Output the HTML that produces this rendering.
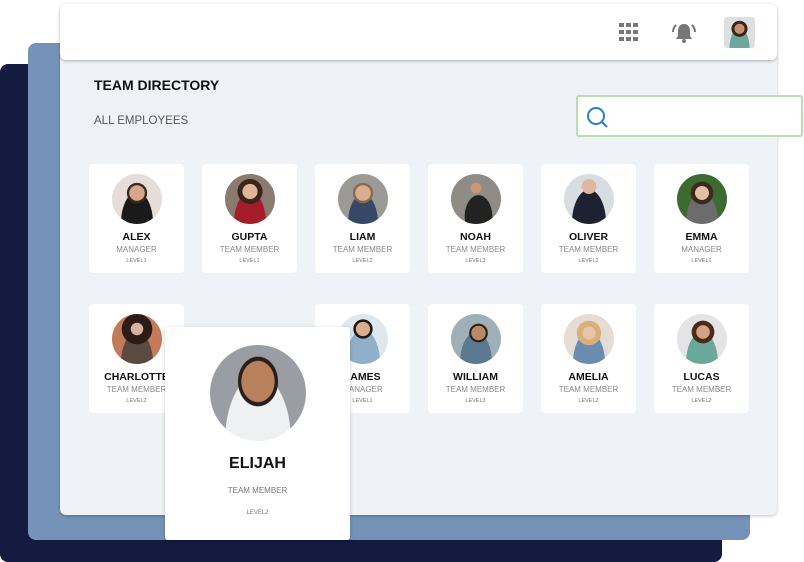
<!DOCTYPE html>
<html><head><meta charset="utf-8"><style>
*{margin:0;padding:0;box-sizing:border-box}
body{width:804px;height:562px;background:#fff;position:relative;overflow:hidden;font-family:"Liberation Sans",sans-serif}
.a{position:absolute}
.card{position:absolute;width:95px;height:109px;background:#fff;border-radius:4px;text-align:center}
.av{position:absolute;left:23px;top:10px;width:50px;height:50px;border-radius:50%}
.n{position:absolute;left:0;right:0;top:67px;font-size:10.5px;font-weight:bold;color:#111}
.r{position:absolute;left:0;right:0;top:81px;font-size:8px;color:#888}
.l{position:absolute;left:0;right:0;top:94px;font-size:5.5px;color:#777}
</style></head><body>
<div class="a" style="left:0;top:64px;width:722px;height:498px;background:#141a40;border-radius:8px"></div>
<div class="a" style="left:28px;top:43px;width:722px;height:497px;background:#7593b8;border-radius:8px"></div>
<div class="a" style="left:60px;top:56px;width:717px;height:459px;background:#eff3f8;border-radius:0 0 6px 6px;box-shadow:0 1px 3px rgba(0,0,0,.25)"></div>
<div class="a" style="left:60px;top:4px;width:717px;height:56px;background:#fff;border-radius:6px;box-shadow:0 1px 3px rgba(0,0,0,.3)"></div>
<svg class="a" style="left:619px;top:23px" width="19" height="18"><g fill="#777"><rect x="0" y="0" width="5" height="4"/><rect x="7" y="0" width="5" height="4"/><rect x="14" y="0" width="5" height="4"/><rect x="0" y="7" width="5" height="4"/><rect x="7" y="7" width="5" height="4"/><rect x="14" y="7" width="5" height="4"/><rect x="0" y="14" width="5" height="4"/><rect x="7" y="14" width="5" height="4"/><rect x="14" y="14" width="5" height="4"/></g></svg>
<svg class="a" style="left:672px;top:22px" width="24" height="22" viewBox="0 0 24 22"><path d="M12 2c-4 0-6 3-6 7v5l-2 3h16l-2-3V9c0-4-2-7-6-7z" fill="#777"/><circle cx="12" cy="19" r="2" fill="#777"/><path d="M4 3Q1 6 1 10M20 3q3 3 3 7" stroke="#777" stroke-width="2" fill="none"/></svg>
<div class="a" style="left:724px;top:17px;width:31px;height:31px;border-radius:3px;background:radial-gradient(circle at 50% 38%,#c98f72 20%,#3a2418 21%,#3a2418 32%,transparent 33%),radial-gradient(ellipse at 50% 100%,#6ea79b 45%,transparent 46%),#dde0e0"></div>
<div class="a" style="left:94px;top:77px;font-size:14px;font-weight:bold;color:#111">TEAM DIRECTORY</div>
<div class="a" style="left:94px;top:115px;font-size:11.5px;color:#555">ALL EMPLOYEES</div>
<div class="a" style="left:576px;top:95px;width:227px;height:42px;background:#fff;border:2px solid #b7dfb0;border-radius:3px"></div>
<svg class="a" style="left:585px;top:105px" width="26" height="26"><circle cx="11" cy="11" r="8" stroke="#2c7fd0" stroke-width="2" fill="none"/><path d="M17 17l5 5" stroke="#2c7fd0" stroke-width="2"/></svg>

<div class="card" style="left:89px;top:164px"><div class="av" style="background:radial-gradient(circle at 50% 38%,#d6a58c 19%,#3b2a20 20%,#3b2a20 25%,transparent 26%),radial-gradient(ellipse at 50% 100%,#1a1a1a 45%,transparent 46%),#e6ddd8"></div><div class="n">ALEX</div><div class="r">MANAGER</div><div class="l">LEVEL1</div></div>
<div class="card" style="left:202px;top:164px"><div class="av" style="background:radial-gradient(circle at 50% 35%,#e0b39a 18%,#3a2518 19%,#3a2518 30%,transparent 31%),radial-gradient(ellipse at 50% 100%,#a51d2a 45%,transparent 46%),#8b7a70"></div><div class="n">GUPTA</div><div class="r">TEAM MEMBER</div><div class="l">LEVEL1</div></div>
<div class="card" style="left:315px;top:164px"><div class="av" style="background:radial-gradient(circle at 50% 38%,#d9ad92 19%,#8a6a48 20%,#8a6a48 25%,transparent 26%),radial-gradient(ellipse at 50% 100%,#354866 42%,transparent 43%),#9c9a96"></div><div class="n">LIAM</div><div class="r">TEAM MEMBER</div><div class="l">LEVEL2</div></div>
<div class="card" style="left:428px;top:164px"><div class="av" style="background:radial-gradient(circle at 50% 28%,#c9967a 12%,transparent 13%),radial-gradient(ellipse at 55% 85%,#222 35%,transparent 36%),#8f8c85"></div><div class="n">NOAH</div><div class="r">TEAM MEMBER</div><div class="l">LEVEL3</div></div>
<div class="card" style="left:541px;top:164px"><div class="av" style="background:radial-gradient(circle at 50% 25%,#e0b8a0 16%,transparent 17%),radial-gradient(ellipse at 50% 100%,#1e2230 48%,transparent 49%),#d8dde2"></div><div class="n">OLIVER</div><div class="r">TEAM MEMBER</div><div class="l">LEVEL2</div></div>
<div class="card" style="left:654px;top:164px"><div class="av" style="background:radial-gradient(circle at 50% 38%,#e3bfa6 17%,#3a2a20 18%,#3a2a20 28%,transparent 29%),radial-gradient(ellipse at 50% 100%,#6c6c6c 45%,transparent 46%),#3d6a30"></div><div class="n">EMMA</div><div class="r">MANAGER</div><div class="l">LEVEL1</div></div>

<div class="card" style="left:89px;top:304px"><div class="av" style="background:radial-gradient(circle at 50% 30%,#d8b29a 14%,#2a1d18 15%,#2a1d18 35%,transparent 36%),radial-gradient(ellipse at 50% 100%,#5a4a40 45%,transparent 46%),#c27a5a"></div><div class="n">CHARLOTTE</div><div class="r">TEAM MEMBER</div><div class="l">LEVEL2</div></div>
<div class="card" style="left:315px;top:304px"><div class="av" style="background:radial-gradient(circle at 50% 30%,#d9ae8c 16%,#1d1a18 17%,#1d1a18 22%,transparent 23%),radial-gradient(ellipse at 50% 100%,#8fb0c8 48%,transparent 49%),#dfe8ee"></div><div class="n">JAMES</div><div class="r">MANAGER</div><div class="l">LEVEL1</div></div>
<div class="card" style="left:428px;top:304px"><div class="av" style="background:radial-gradient(circle at 55% 38%,#b88868 17%,#2a2018 18%,#2a2018 22%,transparent 23%),radial-gradient(ellipse at 50% 100%,#5b7a90 45%,transparent 46%),#9fb0b8"></div><div class="n">WILLIAM</div><div class="r">TEAM MEMBER</div><div class="l">LEVEL3</div></div>
<div class="card" style="left:541px;top:304px"><div class="av" style="background:radial-gradient(circle at 50% 38%,#e8c4ac 16%,#d7b07a 17%,#d7b07a 30%,transparent 31%),radial-gradient(ellipse at 50% 100%,#6a8cb0 45%,transparent 46%),#e6dcd6"></div><div class="n">AMELIA</div><div class="r">TEAM MEMBER</div><div class="l">LEVEL2</div></div>
<div class="card" style="left:654px;top:304px"><div class="av" style="background:radial-gradient(circle at 52% 36%,#d4a184 16%,#4a2a18 17%,#4a2a18 27%,transparent 28%),radial-gradient(ellipse at 50% 100%,#6aa89a 45%,transparent 46%),#e4e4e6"></div><div class="n">LUCAS</div><div class="r">TEAM MEMBER</div><div class="l">LEVEL2</div></div>

<div class="a" style="left:165px;top:327px;width:185px;height:213px;background:#fff;border-radius:3px;box-shadow:0 1px 4px rgba(0,0,0,.2);text-align:center">
<div class="a" style="left:45px;top:18px;width:96px;height:96px;border-radius:50%;background:radial-gradient(ellipse at 50% 38%,#b9805e 24%,#2a1e18 25%,#2a1e18 29%,transparent 30%),radial-gradient(ellipse at 50% 100%,#eef0f2 48%,transparent 49%),#9a9ea4"></div>
<div class="a" style="left:0;right:0;top:128px;font-size:16px;font-weight:bold;color:#111">ELIJAH</div>
<div class="a" style="left:0;right:0;top:159px;font-size:8px;color:#777">TEAM MEMBER</div>
<div class="a" style="left:0;right:0;top:183px;font-size:6px;color:#777">LEVEL2</div>
</div>
</body></html>
